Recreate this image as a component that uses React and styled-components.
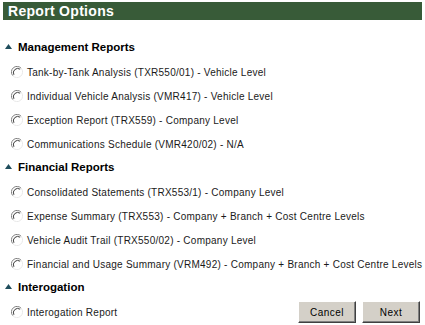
import React from "react";
import styled, { createGlobalStyle } from "styled-components";

const Global = createGlobalStyle`
  html, body { margin: 0; padding: 0; background: #fff; }
  body { font-family: "Liberation Sans", Arial, sans-serif; }
`;

const Page = styled.div`
  width: 425px;
  height: 325px;
  overflow: hidden;
  display: flex;
  flex-direction: column;
`;

const TitleBar = styled.div`
  margin: 2px 3px 0 3px;
  height: 18px;
  background: #385b38;
  color: #fff;
  font-family: "Liberation Sans", Arial, sans-serif;
  font-weight: bold;
  font-size: 14px;
  letter-spacing: 0.3px;
  line-height: 18px;
  padding-left: 5px;
`;

const List = styled.div`
  display: flex;
  flex-direction: column;
  padding-top: 16px;
`;

const SectionHead = styled.div`
  height: 24px;
  box-sizing: border-box;
  padding-bottom: 3px;
  display: flex;
  align-items: center;
  gap: 6px;
  padding-left: 5px;
  font-family: "Liberation Sans", Arial, sans-serif;
  font-weight: bold;
  font-size: 11.5px;
  color: #000;
`;

const Row = styled.div`
  height: 24px;
  display: flex;
  align-items: center;
  padding-left: 11px;
  padding-right: 5px;
  svg { flex-shrink: 0; }
`;

const Label = styled.span`
  margin-left: 4px;
  white-space: nowrap;
  font-family: "Liberation Sans", Arial, sans-serif;
  font-size: 10px;
  letter-spacing: 0.25px;
  color: #1a1a1a;
`;

const Buttons = styled.div`
  margin-left: auto;
  display: flex;
  gap: 6px;
`;

const Button = styled.button`
  width: 58px;
  height: 22px;
  background: #d4d0c8;
  border: 1px solid;
  border-color: #fff #404040 #404040 #fff;
  box-shadow: inset -1px -1px 0 #808080;
  font-family: "Liberation Sans", Arial, sans-serif;
  font-size: 10px;
  letter-spacing: 0.5px;
  color: #000;
  padding: 0;
`;

const Triangle = () => (
  <svg width="7" height="5" viewBox="0 0 7 5">
    <polygon points="3.5,0 7,5 0,5" fill="#1f4d5c" />
  </svg>
);

const Radio = () => (
  <svg width="12" height="12" viewBox="0 0 12 12">
    <circle cx="6" cy="6" r="5.5" fill="#fff" />
    <path d="M10.2 2.3 A5.5 5.5 0 0 0 1.8 9.7" stroke="#808080" strokeWidth="1" fill="none" />
    <path d="M9.1 3.2 A4.3 4.3 0 0 0 2.9 8.8" stroke="#404040" strokeWidth="1" fill="none" />
    <path d="M10.2 2.3 A5.5 5.5 0 0 1 1.8 9.7" stroke="#e8e8e8" strokeWidth="1" fill="none" />
  </svg>
);

const sections = [
  {
    title: "Management Reports",
    items: [
      "Tank-by-Tank Analysis (TXR550/01) - Vehicle Level",
      "Individual Vehicle Analysis (VMR417) - Vehicle Level",
      "Exception Report (TRX559) - Company Level",
      "Communications Schedule (VMR420/02) - N/A",
    ],
  },
  {
    title: "Financial Reports",
    items: [
      "Consolidated Statements (TRX553/1) - Company Level",
      "Expense Summary (TRX553) - Company + Branch + Cost Centre Levels",
      "Vehicle Audit Trail (TRX550/02) - Company Level",
      "Financial and Usage Summary (VRM492) - Company + Branch + Cost Centre Levels",
    ],
  },
  {
    title: "Interogation",
    items: ["Interogation Report"],
    buttons: true,
  },
];

export default function App() {
  return (
    <Page>
      <Global />
      <TitleBar>Report Options</TitleBar>
      <List>
        {sections.map((s) => (
          <React.Fragment key={s.title}>
            <SectionHead>
              <Triangle />
              {s.title}
            </SectionHead>
            {s.items.map((it) => (
              <Row key={it}>
                <Radio />
                <Label>{it}</Label>
                {s.buttons && (
                  <Buttons>
                    <Button>Cancel</Button>
                    <Button>Next</Button>
                  </Buttons>
                )}
              </Row>
            ))}
          </React.Fragment>
        ))}
      </List>
    </Page>
  );
}
